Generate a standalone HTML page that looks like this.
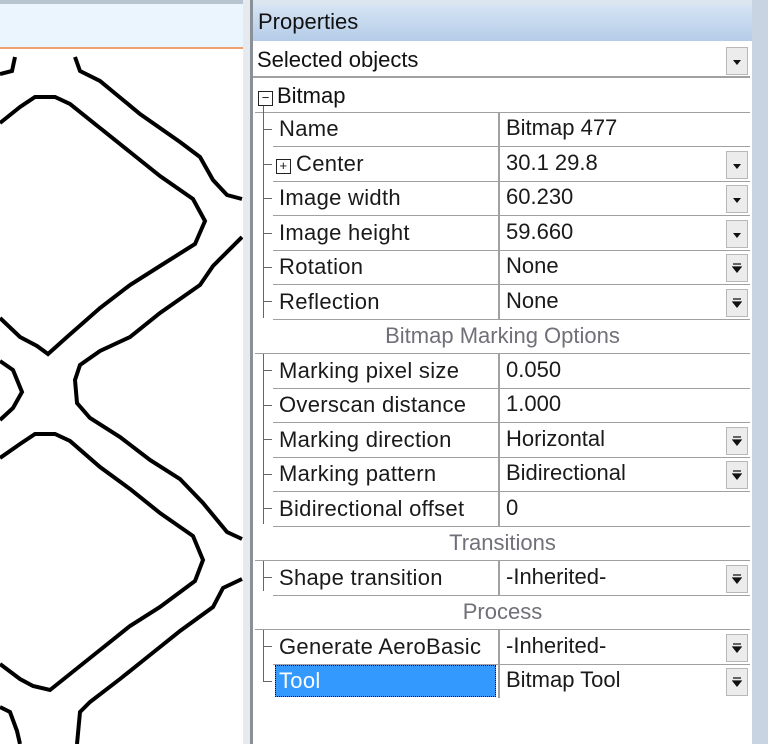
<!DOCTYPE html>
<html><head><style>
body{margin:0;width:768px;height:744px;overflow:hidden;background:#fff;font-family:"Liberation Sans",sans-serif;position:relative}
.a{position:absolute}
.row{position:absolute;left:273px;width:477px;height:34px;border-bottom:1px solid #a0a0a0;font-size:22px;color:#1a1a1a}
.row .n{position:absolute;left:6px;top:4px;white-space:nowrap;letter-spacing:0.3px}
.row .v{position:absolute;left:225px;top:0;height:34px;border-left:2px solid #a0a0a0;padding-left:6px;line-height:32px;width:240px;white-space:nowrap}
.dd{position:absolute;right:2px;top:4px;width:20px;height:26px;background:#ececec;border:1px solid #b8b8b8;font-size:12px;text-align:center;line-height:26px}
.dd svg{position:absolute;left:5px;top:8px}
.tk{position:absolute;left:263px;width:9px;border-top:1px solid #666}
.cat{position:absolute;left:255px;width:495px;height:34px;text-align:center;font-size:22px;color:#707078;line-height:34px;border-bottom:1px solid #a0a0a0}
</style></head><body>
<div class="a" style="left:0;top:0;width:243px;height:4px;background:#b8c4d0"></div>
<div class="a" style="left:0;top:4px;width:243px;height:43px;background:#eaf5fd"></div>
<div class="a" style="left:0;top:47px;width:243px;height:2px;background:#f0a070"></div>
<div class="a" style="left:243px;top:0;width:7px;height:744px;background:#e6e9ee"></div>
<svg class="a" style="left:0;top:0" width="243" height="744"><g fill="none" stroke="#000" stroke-width="4" stroke-linejoin="miter">
<polyline points="0,74 12,71 15,57"/>
<polyline points="75,57 80,71 100,81 117,95 140,114 160,128 180,142 200,157 213,180 227,195 242,199"/>
<polyline points="0,123 20,107 35,97 55,97 70,104 100,128 130,152 160,176 193,199 205,221 195,244 160,266 130,285 100,308 67,337 48,354 37,346 20,337 0,318"/>
<polyline points="242,237 213,266 200,285 160,313 130,337 100,351 80,365 75,380 77,403 90,418 120,437 150,460 180,479 203,503 227,532 242,539"/>
<polyline points="0,361 13,370 22,392 13,408 0,420"/>
<polyline points="0,458 20,444 35,434 55,434 70,441 100,467 130,489 160,513 193,536 203,560 195,581 160,607 130,626 100,650 70,674 50,690 33,686 20,679 0,664"/>
<polyline points="242,579 223,588 213,607 180,631 150,655 120,679 90,702 80,712 77,744"/>
<polyline points="0,707 10,712 17,731 20,744"/>
</g></svg>
<div class="a" style="left:250px;top:0;width:518px;height:744px;background:#f4f6f8"></div>
<div class="a" style="left:250px;top:0;width:3px;height:744px;background:#8a9098"></div>
<div class="a" style="left:752px;top:0;width:16px;height:744px;background:#c8d4e2"></div>
<div class="a" style="left:253px;top:0;width:499px;height:5px;background:#dce6f0"></div>
<div class="a" style="left:253px;top:5px;width:499px;height:36px;background:linear-gradient(#d6e4f4,#b4cce8);font-size:22px;line-height:34px;padding-left:5px;box-sizing:border-box;color:#111">Properties</div>
<div class="a" style="left:253px;top:41px;width:499px;height:703px;background:#fff"></div>
<div class="a" style="left:253px;top:42px;width:497px;height:36px;border-bottom:2px solid #a0a0a0;font-size:22px;line-height:36px;padding-left:4px;box-sizing:border-box;color:#111">Selected objects<div class="dd" style="top:5px"><svg width="10" height="10"><path d="M1,4 L9,4 L5,9 Z" fill="#111"/></svg></div></div>
<div class="a" style="left:255px;top:80px;width:495px;height:32px;border-bottom:1px solid #a0a0a0;font-size:22px;line-height:32px;color:#111"><span style="display:inline-block;width:13px;height:13px;border:1px solid #222;font-size:13px;line-height:12px;text-align:center;margin:0 4px 0 3px;vertical-align:1px">−</span>Bitmap</div>
<div class="a" style="left:263px;top:106px;height:212px;border-left:1px solid #666"></div>
<div class="a" style="left:263px;top:354px;height:170px;border-left:1px solid #666"></div>
<div class="a" style="left:263px;top:561px;height:30px;border-left:1px solid #666"></div>
<div class="a" style="left:263px;top:630px;height:52px;border-left:1px solid #666"></div>

<div class="row" style="top:112px"><div class="n">Name</div><div class="v">Bitmap 477</div></div>
<div class="row" style="top:146.5px"><div class="n" style="left:3px"><span style="display:inline-block;width:13px;height:13px;border:1px solid #222;font-size:13px;line-height:12px;text-align:center;margin-right:5px;vertical-align:1px">+</span>Center</div><div class="v">30.1 29.8</div><div class="dd"><svg width="10" height="10"><path d="M1,4 L9,4 L5,9 Z" fill="#111"/></svg></div></div>
<div class="row" style="top:181px"><div class="n">Image width</div><div class="v">60.230</div><div class="dd"><svg width="10" height="10"><path d="M1,4 L9,4 L5,9 Z" fill="#111"/></svg></div></div>
<div class="row" style="top:215.5px"><div class="n">Image height</div><div class="v">59.660</div><div class="dd"><svg width="10" height="10"><path d="M1,4 L9,4 L5,9 Z" fill="#111"/></svg></div></div>
<div class="row" style="top:250px"><div class="n">Rotation</div><div class="v">None</div><div class="dd"><svg width="10" height="10"><path d="M1,1H9M1,4H9L5,9Z" stroke="#111" stroke-width="1.2" fill="#111"/></svg></div></div>
<div class="row" style="top:284.5px"><div class="n">Reflection</div><div class="v">None</div><div class="dd"><svg width="10" height="10"><path d="M1,1H9M1,4H9L5,9Z" stroke="#111" stroke-width="1.2" fill="#111"/></svg></div></div>
<div class="cat" style="top:319px">Bitmap Marking Options</div>
<div class="row" style="top:353.5px"><div class="n">Marking pixel size</div><div class="v">0.050</div></div>
<div class="row" style="top:388px"><div class="n">Overscan distance</div><div class="v">1.000</div></div>
<div class="row" style="top:422.5px"><div class="n">Marking direction</div><div class="v">Horizontal</div><div class="dd"><svg width="10" height="10"><path d="M1,1H9M1,4H9L5,9Z" stroke="#111" stroke-width="1.2" fill="#111"/></svg></div></div>
<div class="row" style="top:457px"><div class="n">Marking pattern</div><div class="v">Bidirectional</div><div class="dd"><svg width="10" height="10"><path d="M1,1H9M1,4H9L5,9Z" stroke="#111" stroke-width="1.2" fill="#111"/></svg></div></div>
<div class="row" style="top:491.5px"><div class="n">Bidirectional offset</div><div class="v">0</div></div>
<div class="cat" style="top:526px">Transitions</div>
<div class="row" style="top:560.5px"><div class="n">Shape transition</div><div class="v">-Inherited-</div><div class="dd"><svg width="10" height="10"><path d="M1,1H9M1,4H9L5,9Z" stroke="#111" stroke-width="1.2" fill="#111"/></svg></div></div>
<div class="cat" style="top:595px">Process</div>
<div class="row" style="top:629.5px"><div class="n">Generate AeroBasic</div><div class="v">-Inherited-</div><div class="dd"><svg width="10" height="10"><path d="M1,1H9M1,4H9L5,9Z" stroke="#111" stroke-width="1.2" fill="#111"/></svg></div></div>
<div class="row" style="top:664px;border-bottom:none"><div class="n" style="left:2px;top:1px;width:216px;height:30px;background:#3399ff;color:#fff;border:1px dotted #003;padding-left:3px;line-height:30px">Tool</div><div class="v">Bitmap Tool</div><div class="dd"><svg width="10" height="10"><path d="M1,1H9M1,4H9L5,9Z" stroke="#111" stroke-width="1.2" fill="#111"/></svg></div></div>

<div class="tk" style="top:129px"></div><div class="tk" style="top:164px"></div><div class="tk" style="top:198px"></div><div class="tk" style="top:233px"></div><div class="tk" style="top:267px"></div><div class="tk" style="top:301px"></div>
<div class="tk" style="top:370px"></div><div class="tk" style="top:405px"></div><div class="tk" style="top:439px"></div><div class="tk" style="top:474px"></div><div class="tk" style="top:508px"></div>
<div class="tk" style="top:577px"></div><div class="tk" style="top:646px"></div><div class="tk" style="top:681px"></div>
</body></html>
